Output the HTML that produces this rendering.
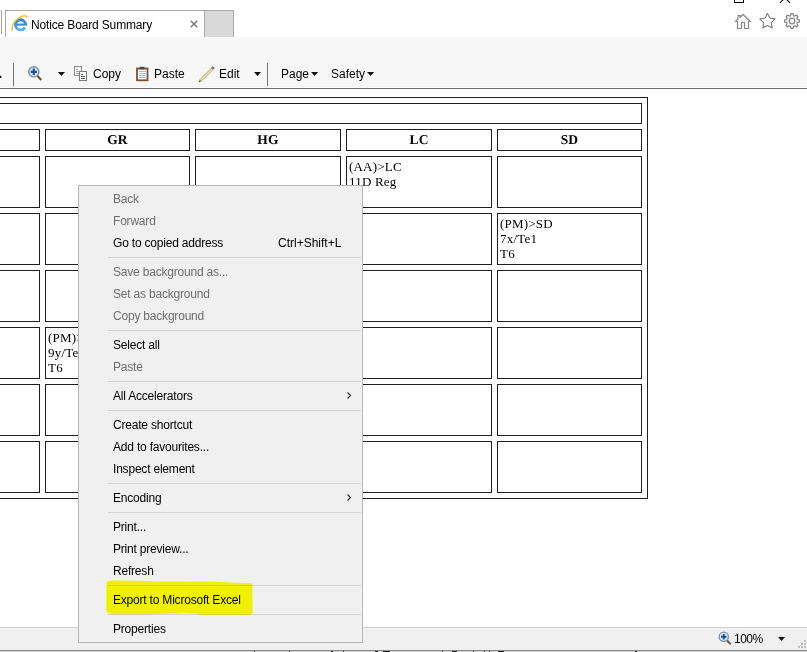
<!DOCTYPE html>
<html><head><meta charset="utf-8">
<style>
html,body{margin:0;padding:0;}
body{width:807px;height:652px;overflow:hidden;position:relative;background:#fff;font-family:"Liberation Sans",sans-serif;}
.a{position:absolute;}
.ui{font-family:"Liberation Sans",sans-serif;font-size:12px;color:#000;white-space:nowrap;line-height:14px;}
#cmd{left:0;top:37px;width:807px;height:50px;background:#f7f7f7;}
#cmdline{left:0;top:88px;width:807px;height:1px;background:#6e6e6e;}
.sep{width:1px;background:#727272;}
.tri{width:0;height:0;border-left:3.5px solid transparent;border-right:3.5px solid transparent;border-top:4px solid #1a1a1a;}
.c{position:absolute;border:1px solid #1e1e1e;box-sizing:border-box;font-family:"Liberation Serif",serif;font-size:13px;line-height:15px;color:#000;padding:2px 0 0 2px;white-space:nowrap;overflow:hidden;letter-spacing:0.2px;}
.h{font-weight:bold;text-align:center;padding:2px 0 0 0;font-size:13.5px;text-rendering:geometricPrecision;}
#menu{left:78px;top:185px;width:285px;height:458px;background:#f0f0f0;border:1px solid #b5b5b5;box-sizing:border-box;}
.mi{position:absolute;left:34px;font-size:12px;line-height:14px;white-space:nowrap;color:#000;letter-spacing:-0.2px;}
.dis{color:#6d6d6d;}
.ms{position:absolute;left:29px;width:253px;height:1px;background:#d4d4d4;}
#status{left:0;top:627px;width:807px;height:23px;background:#f0f0f0;border-top:1px solid #d2d2d2;box-sizing:border-box;}
</style></head><body>

<!-- tab bar -->
<div class="a" style="left:1px;top:10px;width:1px;height:24px;background:#a8a8a8"></div>
<div class="a" style="left:5px;top:10px;width:200px;height:27px;border-left:1px solid #a8a8a8;border-top:1px solid #a8a8a8;box-sizing:border-box;background:#fff"></div>
<div class="a ui" style="left:31px;top:18px;letter-spacing:-0.15px">Notice Board Summary</div>
<div class="a" style="left:204px;top:10px;width:30px;height:27px;background:#d9d9d9;border:1px solid #a8a8a8;border-bottom:none;box-sizing:border-box"></div>

<!-- command bar -->
<div id="cmd" class="a"></div>
<div id="cmdline" class="a"></div>
<div class="a sep" style="left:13px;top:63px;height:23px"></div>
<div class="a sep" style="left:267px;top:63px;height:23px"></div>
<div class="a ui" style="left:93px;top:67px">Copy</div>
<div class="a ui" style="left:154px;top:67px">Paste</div>
<div class="a ui" style="left:219px;top:67px">Edit</div>
<div class="a ui" style="left:281px;top:67px">Page</div>
<div class="a ui" style="left:331px;top:67px">Safety</div>

<!-- page table -->
<div class="a" style="left:-200px;top:97px;width:848px;height:402px;border:1px solid #1e1e1e;box-sizing:border-box"></div>
<div class="c" style="left:-195px;top:103px;width:837px;height:21px"></div>

<div class="c h" style="left:-105px;top:129px;width:145px;height:22px"></div>
<div class="c h" style="left:45px;top:129px;width:145px;height:22px">GR</div>
<div class="c h" style="left:195px;top:129px;width:146px;height:22px">HG</div>
<div class="c h" style="left:346px;top:129px;width:146px;height:22px">LC</div>
<div class="c h" style="left:497px;top:129px;width:145px;height:22px">SD</div>
<div class="c" style="left:-105px;top:156px;width:145px;height:52px"></div>
<div class="c" style="left:45px;top:156px;width:145px;height:52px"></div>
<div class="c" style="left:195px;top:156px;width:146px;height:52px"></div>
<div class="c" style="left:346px;top:156px;width:146px;height:52px">(AA)&gt;LC<br>11D Reg</div>
<div class="c" style="left:497px;top:156px;width:145px;height:52px"></div>
<div class="c" style="left:-105px;top:213px;width:145px;height:52px"></div>
<div class="c" style="left:45px;top:213px;width:145px;height:52px"></div>
<div class="c" style="left:195px;top:213px;width:146px;height:52px"></div>
<div class="c" style="left:346px;top:213px;width:146px;height:52px"></div>
<div class="c" style="left:497px;top:213px;width:145px;height:52px">(PM)&gt;SD<br>7x/Te1<br>T6</div>
<div class="c" style="left:-105px;top:270px;width:145px;height:52px"></div>
<div class="c" style="left:45px;top:270px;width:145px;height:52px"></div>
<div class="c" style="left:195px;top:270px;width:146px;height:52px"></div>
<div class="c" style="left:346px;top:270px;width:146px;height:52px"></div>
<div class="c" style="left:497px;top:270px;width:145px;height:52px"></div>
<div class="c" style="left:-105px;top:327px;width:145px;height:52px"></div>
<div class="c" style="left:45px;top:327px;width:145px;height:52px">(PM)&gt;GR<br>9y/Te1<br>T6</div>
<div class="c" style="left:195px;top:327px;width:146px;height:52px"></div>
<div class="c" style="left:346px;top:327px;width:146px;height:52px"></div>
<div class="c" style="left:497px;top:327px;width:145px;height:52px"></div>
<div class="c" style="left:-105px;top:384px;width:145px;height:52px"></div>
<div class="c" style="left:45px;top:384px;width:145px;height:52px"></div>
<div class="c" style="left:195px;top:384px;width:146px;height:52px"></div>
<div class="c" style="left:346px;top:384px;width:146px;height:52px"></div>
<div class="c" style="left:497px;top:384px;width:145px;height:52px"></div>
<div class="c" style="left:-105px;top:441px;width:145px;height:52px"></div>
<div class="c" style="left:45px;top:441px;width:145px;height:52px"></div>
<div class="c" style="left:195px;top:441px;width:146px;height:52px"></div>
<div class="c" style="left:346px;top:441px;width:146px;height:52px"></div>
<div class="c" style="left:497px;top:441px;width:145px;height:52px"></div>

<!-- status bar -->
<div id="status" class="a"></div>
<div class="a ui" style="left:734px;top:632px;letter-spacing:-0.5px">100%</div>
<div class="a" style="left:0;top:650px;width:807px;height:2px;background:#8a8a8a"></div>
<div class="a" style="left:0;top:651px;width:807px;height:1px;background:#cfcfcf"></div>

<!-- icons -->
<svg class="a" style="left:0;top:0" width="807" height="652" viewBox="0 0 807 652">
 <!-- window buttons cut-off -->
 <rect x="734.5" y="-7.5" width="9" height="10" fill="none" stroke="#000" stroke-width="1"/>
 <path d="M780 2.8 L790 -7.2 M790 2.8 L780 -7.2" stroke="#000" stroke-width="1.1"/>
 <!-- IE logo -->
 <g>
  <defs><linearGradient id="ieg" x1="0" y1="0" x2="0" y2="1"><stop offset="0" stop-color="#2f82d6"/><stop offset="1" stop-color="#55b8ee"/></linearGradient></defs>
  <path d="M25.6 24.7 A5.1 5.1 0 1 0 24.9 27.4" fill="none" stroke="url(#ieg)" stroke-width="2.9"/>
  <path d="M15.3 24.6 H27" stroke="#3a8cd9" stroke-width="2.1"/>
  <path d="M11.9 31 C11.6 25.5 14.5 20.8 18.6 18.2 C22 16 25 15.6 26.4 16.2 C27 16.6 26.9 17.6 26.6 18.3" fill="none" stroke="#f2c230" stroke-width="1.5"/>
 </g>
 <!-- tab close -->
 <path d="M190.8 20.8 L197.2 27.2 M197.2 20.8 L190.8 27.2" stroke="#7c7c7c" stroke-width="1.5"/>
 <!-- home -->
 <path d="M735.5 21.5 L738 19 L738 15.5 L740 15.5 L740 17.5 L743 14.5 L750.5 21.5 L748.5 21.5 L748.5 28.5 L744.5 28.5 L744.5 22.5 L741.5 22.5 L741.5 28.5 L737.5 28.5 L737.5 21.5 Z" fill="none" stroke="#858585" stroke-width="1.2" stroke-linejoin="round"/>
 <!-- star -->
 <path d="M767.50 13.40L769.91 18.08L775.11 18.93L771.40 22.67L772.20 27.87L767.50 25.50L762.80 27.87L763.60 22.67L759.89 18.93L765.09 18.08Z" fill="none" stroke="#858585" stroke-width="1.2" stroke-linejoin="round"/>
 <!-- gear -->
 <path d="M790.84 13.69A7.4 7.4 0 0 1 793.16 13.69L793.39 15.58A5.6 5.6 0 0 1 794.85 16.18L796.35 15.01A7.4 7.4 0 0 1 797.99 16.65L796.82 18.15A5.6 5.6 0 0 1 797.42 19.61L799.31 19.84A7.4 7.4 0 0 1 799.31 22.16L797.42 22.39A5.6 5.6 0 0 1 796.82 23.85L797.99 25.35A7.4 7.4 0 0 1 796.35 26.99L794.85 25.82A5.6 5.6 0 0 1 793.39 26.42L793.16 28.31A7.4 7.4 0 0 1 790.84 28.31L790.61 26.42A5.6 5.6 0 0 1 789.15 25.82L787.65 26.99A7.4 7.4 0 0 1 786.01 25.35L787.18 23.85A5.6 5.6 0 0 1 786.58 22.39L784.69 22.16A7.4 7.4 0 0 1 784.69 19.84L786.58 19.61A5.6 5.6 0 0 1 787.18 18.15L786.01 16.65A7.4 7.4 0 0 1 787.65 15.01L789.15 16.18A5.6 5.6 0 0 1 790.61 15.58Z" fill="none" stroke="#858585" stroke-width="1.2" stroke-linejoin="round"/>
 <circle cx="792" cy="21" r="2.8" fill="none" stroke="#858585" stroke-width="1.2"/>
 <!-- previous tab dropdown tail -->
 <rect x="-0.5" y="75.8" width="2" height="2.2" rx="0.8" fill="#111"/>
 <!-- zoom icon cmd -->
 <line x1="37" y1="75.5" x2="41.3" y2="80" stroke="#6b4a2e" stroke-width="2"/>
 <circle cx="33.8" cy="71.8" r="5.1" fill="#dcedfb" stroke="#7d8c9a" stroke-width="1.4"/>
 <path d="M33.8 68.6 V75 M30.6 71.8 H37" stroke="#1f4fa0" stroke-width="2.2"/>
 <!-- copy icon -->
 <rect x="74.5" y="66.5" width="7" height="9" fill="#fff" stroke="#8c8c8c"/>
 <path d="M76 69.5 H78 M76 71.5 H80 M76 73.5 H79" stroke="#9aa4ae"/>
 <rect x="79.5" y="71.5" width="7" height="9" fill="#fff" stroke="#7d7d7d"/>
 <path d="M81 74.5 H83 M81 76.5 H85 M81 78.5 H85" stroke="#4f5e6e"/>
 <!-- paste icon -->
 <rect x="137" y="68.5" width="10.5" height="11.8" fill="#fff" stroke="#7a5232" stroke-width="1.8"/>
 <path d="M139 71.5 H146 M139 73.5 H146 M139 75.5 H146 M139 77.5 H146" stroke="#a9bfcf" stroke-width="1"/>
 <rect x="139.5" y="66.8" width="5" height="2.6" fill="#4a4a4a"/>
 <!-- pencil -->
 <path d="M200 81 L212.5 68.5" stroke="#bdb080" stroke-width="2.8" stroke-linecap="butt"/>
 <path d="M200.3 80.7 L212.3 68.7" stroke="#f0e8a6" stroke-width="1.3"/>
 <path d="M211.9 69.1 L213.9 67.1" stroke="#808080" stroke-width="2.8"/>
 <path d="M199 82 L200.6 80.4" stroke="#666" stroke-width="1.4"/>
 <!-- status zoom icon -->
 <line x1="726.5" y1="640" x2="730.8" y2="644.3" stroke="#6b5a4e" stroke-width="2"/>
 <circle cx="723.8" cy="636.8" r="4.6" fill="#dcedfb" stroke="#7d8c9a" stroke-width="1.3"/>
 <path d="M723.8 634 V639.6 M721 636.8 H726.6" stroke="#1f4fa0" stroke-width="2"/>
 <!-- grip -->
 <g fill="#bdbdbd"><rect x="804" y="640" width="2" height="2"/><rect x="801" y="643" width="2" height="2"/><rect x="804" y="643" width="2" height="2"/><rect x="798" y="646" width="2" height="2"/><rect x="801" y="646" width="2" height="2"/><rect x="804" y="646" width="2" height="2"/></g>
<!-- taskbar marks -->
 <rect x="254" y="651" width="1" height="1" fill="#222"/><rect x="289" y="651" width="1" height="1" fill="#222"/><rect x="331" y="651" width="2" height="1" fill="#222"/><rect x="343" y="651" width="1" height="1" fill="#222"/><rect x="375" y="651" width="3" height="1" fill="#222"/><rect x="383" y="651" width="7" height="1" fill="#222"/><rect x="442" y="651" width="1" height="1" fill="#222"/><rect x="452" y="651" width="5" height="1" fill="#222"/><rect x="473" y="651" width="1" height="1" fill="#222"/><rect x="484" y="651" width="1" height="1" fill="#222"/><rect x="489" y="651" width="1" height="1" fill="#222"/><rect x="498" y="651" width="6" height="1" fill="#222"/><rect x="635" y="651" width="2" height="1" fill="#222"/>
 <!-- dropdown arrows -->
 <path d="M58 72H65L61.5 76Z M254 72H261L257.5 76Z M311 72H318L314.5 76Z M367 72H374L370.5 76Z M778 637H785L781.5 641Z" fill="#111"/>
</svg>

<!-- context menu -->
<div id="menu" class="a">
<div class="mi dis" style="top:6px">Back</div>
<div class="mi dis" style="top:28px">Forward</div>
<div class="mi" style="top:50px">Go to copied address</div>
<div class="mi" style="top:50px;left:199px;letter-spacing:0">Ctrl+Shift+L</div>
<div class="ms" style="top:71px"></div>
<div class="mi dis" style="top:79px">Save background as...</div>
<div class="mi dis" style="top:101px">Set as background</div>
<div class="mi dis" style="top:123px">Copy background</div>
<div class="ms" style="top:144px"></div>
<div class="mi" style="top:152px">Select all</div>
<div class="mi dis" style="top:174px">Paste</div>
<div class="ms" style="top:195px"></div>
<div class="mi" style="top:203px">All Accelerators</div>
<svg class="a" style="left:267px;top:205px" width="7" height="10"><path d="M1.5 1.5 L4.5 4.5 L1.5 7.5" fill="none" stroke="#333" stroke-width="1.15"/></svg>
<div class="ms" style="top:224px"></div>
<div class="mi" style="top:232px">Create shortcut</div>
<div class="mi" style="top:254px">Add to favourites...</div>
<div class="mi" style="top:276px">Inspect element</div>
<div class="ms" style="top:297px"></div>
<div class="mi" style="top:305px">Encoding</div>
<svg class="a" style="left:267px;top:307px" width="7" height="10"><path d="M1.5 1.5 L4.5 4.5 L1.5 7.5" fill="none" stroke="#333" stroke-width="1.15"/></svg>
<div class="ms" style="top:326px"></div>
<div class="mi" style="top:334px">Print...</div>
<div class="mi" style="top:356px">Print preview...</div>
<div class="mi" style="top:378px">Refresh</div>
<div class="ms" style="top:399px"></div>
<div class="mi" style="top:407px">Export to Microsoft Excel</div>
<div class="ms" style="top:428px"></div>
<div class="mi" style="top:436px">Properties</div>
</div>

<!-- highlighter -->
<svg class="a" style="left:0;top:0;mix-blend-mode:multiply" width="807" height="652">
 <path d="M106.5 583 Q107 580.6 110 580.5 L140 580.8 L160 581.6 L175 581.6 L215 581.8 L232 582.6 L252.3 583.2 L252.6 613 Q252.5 614.8 250 614.8 L200 614.8 L196 613.6 L185 612.8 L176 613.6 L150 614.2 L115 614.2 Q107 614 106.3 611 Z" fill="#ffff00"/>
</svg>
</body></html>
